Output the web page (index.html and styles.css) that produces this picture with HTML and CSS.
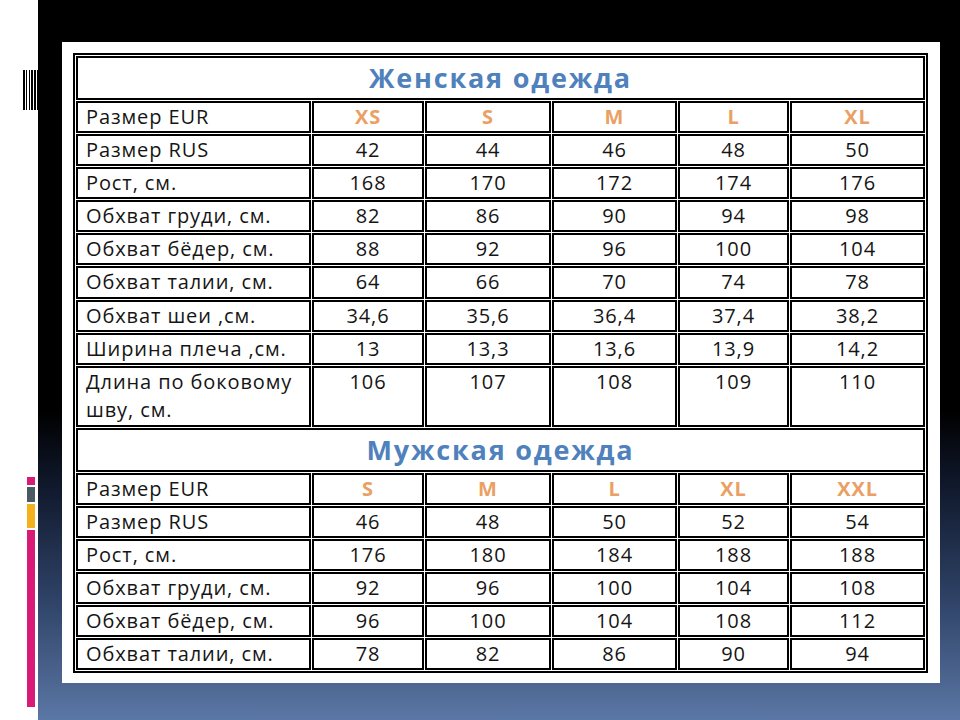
FILE: index.html
```html
<!DOCTYPE html>
<html lang="ru">
<head>
<meta charset="utf-8">
<title>Таблица размеров</title>
<link rel="stylesheet" href="styles.css">
</head>
<body>
<div class="screen">
  <aside class="rail">
    <div class="barcode"></div>
    <div class="marks">
      <span class="mark mark-pink-small"></span>
      <span class="mark mark-gray"></span>
      <span class="mark mark-orange"></span>
      <span class="mark mark-pink-long"></span>
    </div>
  </aside>
  <main class="stage">
    <div class="sheet">
      <table class="sizes">
        <colgroup>
          <col class="c-label"><col class="c1"><col class="c2"><col class="c3"><col class="c4"><col class="c5">
        </colgroup>
        <tbody>
          <tr class="title-row"><td colspan="6">Женская одежда</td></tr>
          <tr class="size-row"><td>Размер EUR</td><td>XS</td><td>S</td><td>M</td><td>L</td><td>XL</td></tr>
          <tr><td>Размер RUS</td><td>42</td><td>44</td><td>46</td><td>48</td><td>50</td></tr>
          <tr><td>Рост, см.</td><td>168</td><td>170</td><td>172</td><td>174</td><td>176</td></tr>
          <tr><td>Обхват груди, см.</td><td>82</td><td>86</td><td>90</td><td>94</td><td>98</td></tr>
          <tr><td>Обхват бёдер, см.</td><td>88</td><td>92</td><td>96</td><td>100</td><td>104</td></tr>
          <tr><td>Обхват талии, см.</td><td>64</td><td>66</td><td>70</td><td>74</td><td>78</td></tr>
          <tr><td>Обхват шеи ,см.</td><td>34,6</td><td>35,6</td><td>36,4</td><td>37,4</td><td>38,2</td></tr>
          <tr><td>Ширина плеча ,см.</td><td>13</td><td>13,3</td><td>13,6</td><td>13,9</td><td>14,2</td></tr>
          <tr class="tall-row"><td>Длина по боковому<br>шву, см.</td><td>106</td><td>107</td><td>108</td><td>109</td><td>110</td></tr>
          <tr class="title-row"><td colspan="6">Мужская одежда</td></tr>
          <tr class="size-row"><td>Размер EUR</td><td>S</td><td>M</td><td>L</td><td>XL</td><td>XXL</td></tr>
          <tr><td>Размер RUS</td><td>46</td><td>48</td><td>50</td><td>52</td><td>54</td></tr>
          <tr><td>Рост, см.</td><td>176</td><td>180</td><td>184</td><td>188</td><td>188</td></tr>
          <tr><td>Обхват груди, см.</td><td>92</td><td>96</td><td>100</td><td>104</td><td>108</td></tr>
          <tr><td>Обхват бёдер, см.</td><td>96</td><td>100</td><td>104</td><td>108</td><td>112</td></tr>
          <tr><td>Обхват талии, см.</td><td>78</td><td>82</td><td>86</td><td>90</td><td>94</td></tr>
        </tbody>
      </table>
    </div>
  </main>
</div>
</body>
</html>
```

FILE: styles.css
```css
html, body {
  margin: 0;
  padding: 0;
}
body {
  width: 960px;
  height: 720px;
  overflow: hidden;
  font-family: "Open Sans", "Noto Sans", "DejaVu Sans", sans-serif;
}
.screen {
  display: flex;
  width: 960px;
  height: 720px;
}
.rail {
  width: 38px;
  flex: 0 0 38px;
  background: #ffffff;
  display: flex;
  flex-direction: column;
}
.barcode {
  margin-top: 70px;
  margin-left: 23px;
  width: 15px;
  height: 40px;
  background: repeating-linear-gradient(90deg, #000 0 1.6px, #fff 1.6px 2.8px);
}
.marks {
  margin-top: 367px;
  margin-left: 27px;
  width: 8px;
  display: flex;
  flex-direction: column;
  gap: 2px;
}
.mark { display: block; width: 8px; }
.mark-pink-small { height: 8px; background: #d91b78; }
.mark-gray { height: 15px; background: #4b5964; }
.mark-orange { height: 24px; background: #f2b11d; }
.mark-pink-long { height: 177px; background: #d91b78; }

.stage {
  flex: 1;
  padding: 42px 0 0 24px;
  background: linear-gradient(180deg, #000 0, #000 410px, #111a2e 490px, #2f4367 600px, #5b77a5 720px);
}
.sheet {
  width: 878px;
  height: 641px;
  box-sizing: border-box;
  background: #fff;
  padding: 11px 12px 12px 11px;
}
.sizes {
  width: 855px;
  table-layout: fixed;
  border-collapse: separate;
  border-spacing: 1px;
  border: 2px solid #000;
  color: #151515;
  font-size: 20px;
  letter-spacing: 0.9px;
}
.c-label { width: 235px; }
.c1 { width: 112px; }
.c2 { width: 126px; }
.c3 { width: 125px; }
.c4 { width: 111px; }
.sizes td {
  border: 2px solid #000;
  padding: 0;
  height: 28.1px;
  line-height: 28.1px;
  text-align: center;
  vertical-align: top;
  white-space: nowrap;
}
.sizes td:first-child {
  text-align: left;
  padding-left: 8px;
}
.size-row td {
  color: #eaa064;
  font-weight: 700;
}
.size-row td:first-child {
  color: #151515;
  font-weight: 400;
}
.title-row td,
.title-row td:first-child {
  height: 40px;
  line-height: 40px;
  text-align: center;
  padding: 0;
  font-size: 27px;
  letter-spacing: 1.8px;
  font-weight: 700;
  color: #4f81bd;
}
.tall-row td {
  height: 57px;
  line-height: 28.5px;
}
```
